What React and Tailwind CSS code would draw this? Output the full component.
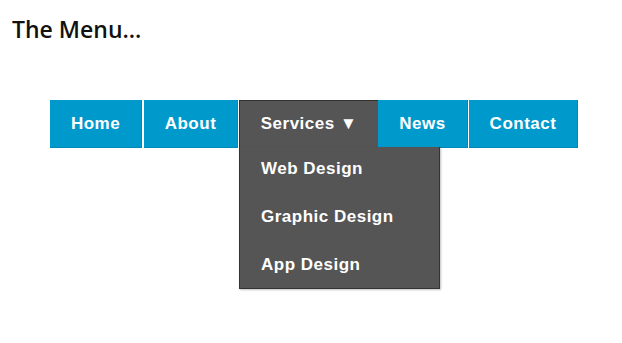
import { useState } from 'react';

const items = [
  { label: 'Home', w: 'w-[92px] mr-[2px]' },
  { label: 'About', w: 'w-[94px] mr-px' },
  { label: 'Services', w: 'w-[139px]' },
  { label: 'News', w: 'w-[90px] mr-px' },
  { label: 'Contact', w: 'w-[109px]' },
];
const subItems = ['Web Design', 'Graphic Design', 'App Design'];

export default function App() {
  const [open] = useState('Services');

  return (
    <div className="w-[622px] h-[343px] bg-white" style={{ fontFamily: "'Liberation Sans', Arial, sans-serif" }}>
      <h1 className="pl-3 pt-[14px] text-[23px] leading-[31px] font-semibold text-[#111]" style={{ fontFamily: "'Open Sans', sans-serif" }}>
        The Menu...
      </h1>

      <ul className="flex ml-[50px] mt-[55px]">
        {items.map(({ label, w }) => {
          const isOpen = label === open;
          return (
            <li key={label} className="relative">
              {isOpen ? (
                <>
                  <a className={`block h-[48px] ${w} border-l border-t border-[#333] bg-[#555] text-white text-[17px] tracking-[0.5px] font-bold leading-[46px] text-center whitespace-nowrap`}>
                    {label} ▼
                  </a>
                  {/* Dropdown */}
                  <ul className="absolute left-0 top-[47px] w-[201px] z-10 bg-[#555] border-x border-b border-[#333] shadow-[1px_1px_2px_rgba(0,0,0,0.25)]">
                    {subItems.map((s, i) => (
                      <li key={s}>
                        <a className={`block px-[21px] text-white text-[17px] tracking-[0.5px] font-bold whitespace-nowrap ${i === 0 ? 'h-[45px] leading-[44px]' : 'h-[48px] leading-[49px]'}`}>{s}</a>
                      </li>
                    ))}
                  </ul>
                </>
              ) : (
                <a className={`block h-[48px] ${w} border-r border-b border-[#0088b8] bg-[#0099cc] text-white text-[17px] tracking-[0.5px] font-bold leading-[47px] text-center whitespace-nowrap`}>
                  {label}
                </a>
              )}
            </li>
          );
        })}
      </ul>
    </div>
  );
}
